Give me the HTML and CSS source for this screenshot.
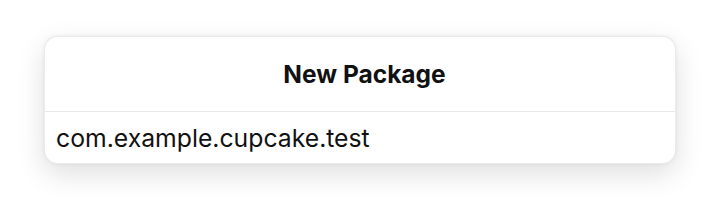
FILE: index.html
```html
<!DOCTYPE html>
<html lang="en">
<head>
    <meta charset="UTF-8">
    <meta name="viewport" content="width=device-width, initial-scale=1.0">
    <title>New Package</title>
    <link rel="stylesheet" href="styles.css">
</head>
<body>
    <div class="dialog">
        <div class="dialog-header">
            <h1>New Package</h1>
        </div>
        <div class="dialog-body">
            <input class="package-input" type="text" value="com.example.cupcake.test">
        </div>
    </div>
</body>
</html>
```

FILE: styles.css
```css
html, body {
    margin: 0;
    background: #ffffff;
}
body {
    font-family: 'Inter', 'Noto Sans', sans-serif;
    padding: 36px 44px;
}
.dialog {
    width: 632px;
    height: 128px;
    box-sizing: border-box;
    background: #ffffff;
    border-radius: 14px;
    border: 1px solid rgba(0, 0, 0, 0.08);
    box-shadow: 0 10px 28px rgba(0, 0, 0, 0.13), 0 0 4px rgba(0, 0, 0, 0.06);
    display: flex;
    flex-direction: column;
    overflow: hidden;
}
.dialog-header {
    height: 75px;
    flex-shrink: 0;
    display: flex;
    align-items: center;
    justify-content: center;
    padding-left: 9px;
    border-bottom: 1px solid #e8e8ed;
    box-sizing: border-box;
}
.dialog-header h1 {
    margin: 0;
    font-size: 24.5px;
    font-weight: 700;
    color: #111111;
}
.dialog-body {
    flex: 1;
    display: flex;
    align-items: center;
    padding: 0 11px;
}
.package-input {
    border: none;
    outline: none;
    width: 100%;
    padding: 0;
    font-family: 'Inter', 'Noto Sans', sans-serif;
    font-size: 24.75px;
    color: #111111;
    background: transparent;
}
```
